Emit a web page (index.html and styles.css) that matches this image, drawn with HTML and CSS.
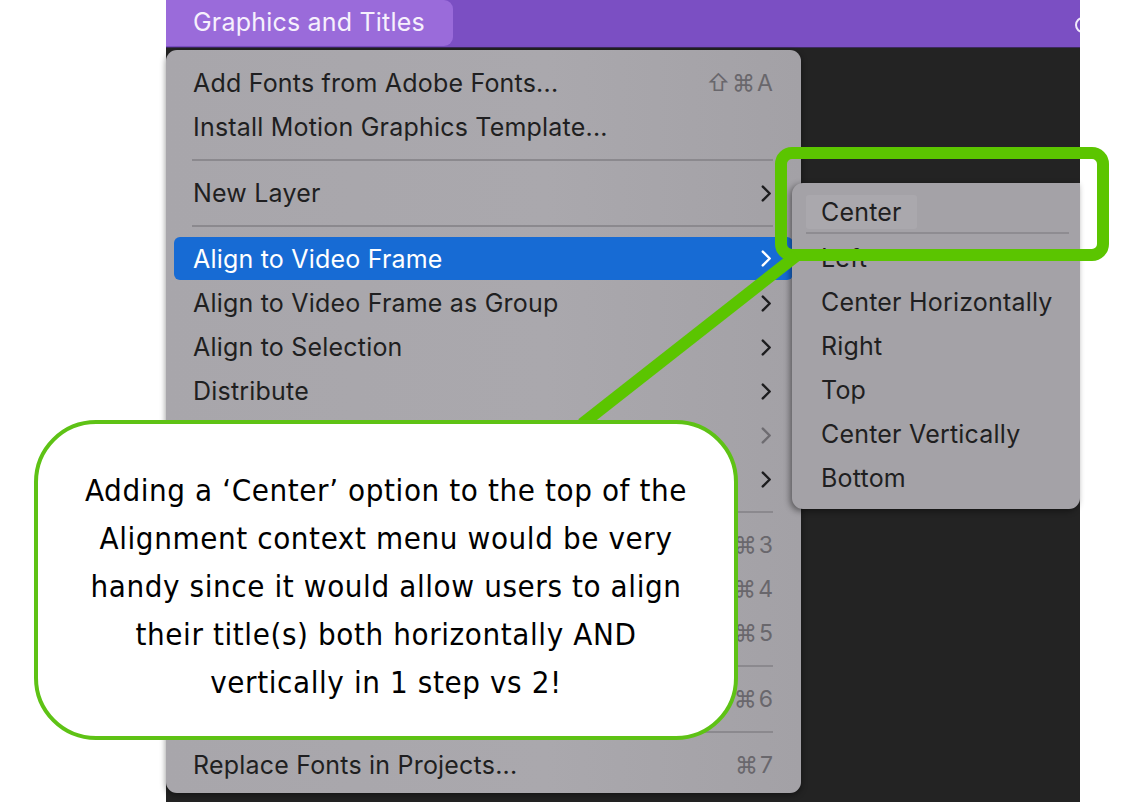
FILE: index.html
```html
<!DOCTYPE html>
<html lang="en">
<head>
<meta charset="utf-8">
<title>Graphics and Titles menu</title>
<link rel="stylesheet" href="styles.css">
</head>
<body>
<div class="page">
  <div class="app">
    <div class="topbar">
      <div class="tab">Graphics and Titles</div>
      <span class="ring"></span>
    </div>
    <div class="workspace"></div>
  </div>

  <div class="menu">
    <div class="item"><span class="label">Add Fonts from Adobe Fonts...</span><span class="key">⇧⌘A</span></div>
    <div class="item"><span class="label">Install Motion Graphics Template...</span></div>
    <div class="sep"></div>
    <div class="item"><span class="label">New Layer</span><svg class="chev" viewBox="0 0 10 16"><polyline points="1.5,1.5 8,8 1.5,14.5"/></svg></div>
    <div class="sep"></div>
    <div class="item active"><span class="label">Align to Video Frame</span><svg class="chev" viewBox="0 0 10 16"><polyline points="1.5,1.5 8,8 1.5,14.5"/></svg></div>
    <div class="item"><span class="label">Align to Video Frame as Group</span><svg class="chev" viewBox="0 0 10 16"><polyline points="1.5,1.5 8,8 1.5,14.5"/></svg></div>
    <div class="item"><span class="label">Align to Selection</span><svg class="chev" viewBox="0 0 10 16"><polyline points="1.5,1.5 8,8 1.5,14.5"/></svg></div>
    <div class="item"><span class="label">Distribute</span><svg class="chev" viewBox="0 0 10 16"><polyline points="1.5,1.5 8,8 1.5,14.5"/></svg></div>
    <div class="item disabled"><span class="label"></span><svg class="chev" viewBox="0 0 10 16"><polyline points="1.5,1.5 8,8 1.5,14.5"/></svg></div>
    <div class="item"><span class="label"></span><svg class="chev" viewBox="0 0 10 16"><polyline points="1.5,1.5 8,8 1.5,14.5"/></svg></div>
    <div class="sep"></div>
    <div class="item"><span class="label"></span><span class="key">⌘3</span></div>
    <div class="item"><span class="label"></span><span class="key">⌘4</span></div>
    <div class="item"><span class="label"></span><span class="key">⌘5</span></div>
    <div class="sep"></div>
    <div class="item"><span class="label"></span><span class="key">⌘6</span></div>
    <div class="sep"></div>
    <div class="item"><span class="label">Replace Fonts in Projects...</span><span class="key">⌘7</span></div>
  </div>

  <div class="submenu">
    <div class="sub-first"><span class="sub-hover">Center</span></div>
    <div class="sub-sep"></div>
    <div class="sub-item">Left</div>
    <div class="sub-item">Center Horizontally</div>
    <div class="sub-item">Right</div>
    <div class="sub-item">Top</div>
    <div class="sub-item">Center Vertically</div>
    <div class="sub-item">Bottom</div>
  </div>

  <div class="focus-box"></div>

  <svg class="connector" width="1126" height="802" viewBox="0 0 1126 802">
    <line x1="582" y1="424" x2="796" y2="256"/>
  </svg>

  <div class="callout">
    <p>Adding a ‘Center’ option to the top of the Alignment context menu would be very handy since it would allow users to align their title(s) both horizontally AND vertically in 1 step vs 2!</p>
  </div>
</div>
</body>
</html>
```

FILE: styles.css
```css
* { box-sizing: border-box; }

html, body {
  margin: 0;
  padding: 0;
  background: #ffffff;
}

.page {
  position: relative;
  width: 1126px;
  height: 802px;
  overflow: hidden;
  font-family: "Inter", "DejaVu Sans", sans-serif;
}

.app {
  margin-left: 166px;
  width: 914px;
  height: 802px;
  display: flex;
  flex-direction: column;
  overflow: hidden;
  background: #232323;
}

.topbar {
  height: 48px;
  flex: none;
  display: flex;
  align-items: flex-start;
  justify-content: space-between;
  background: #7b4fc3;
  border-bottom: 1px solid #3d2a5e;
}

.tab {
  width: 287px;
  height: 46px;
  padding-left: 27px;
  display: flex;
  align-items: center;
  background: #9a6bda;
  border-radius: 0 9px 9px 0;
  color: #f6f0fd;
  font-size: 25px;
  letter-spacing: 0.2px;
  padding-bottom: 2px;
}

.ring {
  width: 16px;
  height: 16px;
  margin-top: 17px;
  margin-right: -11px;
  border: 2px solid #f1eafb;
  border-radius: 50%;
}

.workspace {
  flex: 1;
  background: #232323;
}

/* main dropdown */
.menu {
  position: absolute;
  left: 166px;
  top: 50px;
  width: 635px;
  padding: 11px 8px 6px 8px;
  background: linear-gradient(90deg, #a8a6ab 0%, #aaa8ad 60%, #a3a1a6 100%);
  border-radius: 11px;
  box-shadow: 0 2px 6px rgba(0,0,0,0.45);
  color: #1f1f21;
  font-size: 25px;
  letter-spacing: 0.2px;
}

.item {
  height: 44px;
  display: flex;
  align-items: center;
  justify-content: space-between;
  padding: 0 20px 0 19px;
  border-radius: 6px;
}

.item.active {
  background: #176bd4;
  color: #ffffff;
  height: 43px;
  margin-bottom: 1px;
}

.label {
  white-space: nowrap;
}

.key {
  color: #69676c;
  letter-spacing: 2px;
  margin-right: -2px;
  font-size: 23px;
  font-family: "Inter", "DejaVu Sans", sans-serif;
}

.chev {
  width: 11px;
  height: 17px;
  margin-right: 1px;
}

.chev polyline {
  fill: none;
  stroke: #1d1d1f;
  stroke-width: 2.3;
  stroke-linecap: round;
  stroke-linejoin: round;
}

.item.active .chev polyline { stroke: #ffffff; }
.item.disabled .chev polyline { stroke: #6e6c71; }

.sep {
  height: 22px;
  display: flex;
  align-items: center;
  padding: 0 20px 0 18px;
}

.sep::before {
  content: "";
  flex: 1;
  height: 2px;
  background: #8b898e;
}

/* submenu */
.submenu {
  position: absolute;
  left: 792px;
  top: 183px;
  width: 288px;
  padding: 12px 11px 9px 14px;
  background: #a4a2a7;
  border-radius: 11px 0 11px 11px;
  box-shadow: -2px 2px 6px rgba(0,0,0,0.45);
  color: #1f1f21;
  font-size: 25px;
  letter-spacing: 0.2px;
}

.sub-first {
  height: 34px;
  display: flex;
  align-items: center;
}

.sub-hover {
  height: 34px;
  display: flex;
  align-items: center;
  padding: 0 15px;
  background: #aaa8ad;
  border-radius: 3px;
}

.sub-sep {
  height: 7px;
  display: flex;
  align-items: center;
}

.sub-sep::before {
  content: "";
  flex: 1;
  height: 2px;
  background: #8e8c91;
}

.sub-item {
  height: 44px;
  display: flex;
  align-items: center;
  padding-left: 15px;
  white-space: nowrap;
}

/* annotations */
.focus-box {
  position: absolute;
  left: 775px;
  top: 147px;
  width: 334px;
  height: 114px;
  border: 12px solid #5bc500;
  border-radius: 17px;
}

.connector {
  position: absolute;
  left: 0;
  top: 0;
  pointer-events: none;
}

.connector line {
  stroke: #5bc500;
  stroke-width: 12;
}

.callout {
  position: absolute;
  left: 34px;
  top: 420px;
  width: 704px;
  height: 320px;
  padding-top: 42px;
  background: #ffffff;
  border: 4px solid #5ec215;
  border-radius: 62px;
  text-align: center;
}

.callout p {
  width: 620px;
  margin: 0 auto;
  font-family: "DejaVu Sans Condensed", "DejaVu Sans", sans-serif;
  font-size: 31px;
  letter-spacing: 0.6px;
  line-height: 48px;
  color: #000000;
}
```
